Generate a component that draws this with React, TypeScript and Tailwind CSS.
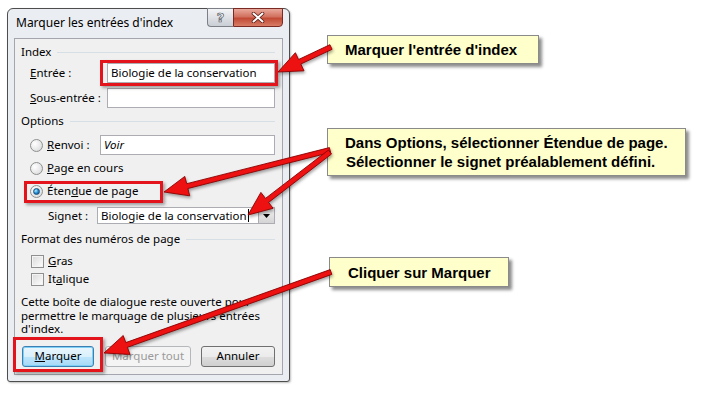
import React from 'react';

type Pt = [number, number];

function arrowPoints(tail: Pt, tip: Pt, shaft = 5, headLen = 24, headW = 20) {
  const [x1, y1] = tail;
  const [x2, y2] = tip;
  const dx = x2 - x1;
  const dy = y2 - y1;
  const len = Math.hypot(dx, dy);
  const ux = dx / len;
  const uy = dy / len;
  const px = -uy;
  const py = ux;
  const bx = x2 - ux * headLen;
  const by = y2 - uy * headLen;
  const pts: Pt[] = [
    [x1 + (px * shaft) / 2, y1 + (py * shaft) / 2],
    [bx + (px * shaft) / 2, by + (py * shaft) / 2],
    [bx + (px * headW) / 2, by + (py * headW) / 2],
    [x2, y2],
    [bx - (px * headW) / 2, by - (py * headW) / 2],
    [bx - (px * shaft) / 2, by - (py * shaft) / 2],
    [x1 - (px * shaft) / 2, y1 - (py * shaft) / 2],
  ];
  return pts.map(p => `${p[0].toFixed(1)},${p[1].toFixed(1)}`).join(' ');
}

const arrows: [Pt, Pt][] = [
  [[331, 47], [278, 72]],
  [[330, 150], [164, 192]],
  [[330, 152], [248, 215]],
  [[331, 272], [104, 353]],
];

function GroupHeader({ label, className = '' }: { label: string; className?: string }) {
  return (
    <div className={`flex items-center h-[16px] ${className}`}>
      <span className="pr-[6px]">{label}</span>
      <span className="flex-1 h-px bg-[#d5dfe5]" />
    </div>
  );
}

function Radio({ checked = false }: { checked?: boolean }) {
  return (
    <span className="w-[13px] h-[13px] shrink-0 rounded-full border border-[#8e8f8f] bg-[radial-gradient(circle_at_35%_35%,#ffffff,#e6e6e6_60%,#cfcfcf)] flex items-center justify-center">
      {checked && (
        <span className="w-[7px] h-[7px] rounded-full bg-[radial-gradient(circle_at_35%_35%,#b7ecff,#1f8fd6_50%,#0a3f6e)] border border-[#1c4f7a]" />
      )}
    </span>
  );
}

function Checkbox() {
  return (
    <span className="w-[13px] h-[13px] shrink-0 border border-[#8e8f8f] bg-[#f4f4f4] flex items-center justify-center">
      <span className="w-[9px] h-[9px] bg-linear-to-br from-[#dcdcdc] to-[#fbfbfb]" />
    </span>
  );
}

function TextBox({ children, className = '' }: { children?: React.ReactNode; className?: string }) {
  return (
    <div className={`h-[20px] bg-white border border-[#abadb3] flex items-center px-[3px] ${className}`}>
      {children}
    </div>
  );
}

const btn =
  'h-[21px] rounded-[3px] border flex items-center justify-center';

export default function App() {
  return (
    <div className="relative w-[703px] h-[397px] bg-white overflow-hidden font-['Noto_Sans',sans-serif] text-[12px] text-black leading-none">
      <div className="pl-[7px] pt-[8px]">
        {/* dialog */}
        <div className="w-[283px] h-[374px] border border-[#4d4d4d] rounded-t-[6px] rounded-b-[3px] bg-[#eaedf1] flex flex-col shadow-[1px_1px_2px_rgba(0,0,0,0.25)]">
          <div className="h-[29px] flex items-start justify-between pl-[8px] pr-[6px]">
            <span className="mt-[8px] text-[12px]">Marquer les entrées d'index</span>
            <div className="flex -mt-px">
              <div className="w-[26px] h-[19px] rounded-bl-[4px] border border-[#7c8086] border-r-0 bg-linear-to-b from-[#f3f4f6] to-[#c9ced5] flex items-center justify-center">
                <span className="font-['DejaVu_Sans',sans-serif] font-bold text-[13px] text-[#f6f6f6] [-webkit-text-stroke:0.7px_#555b63]">?</span>
              </div>
              <div className="w-[50px] h-[19px] rounded-br-[4px] border border-[#7a2a22] bg-[linear-gradient(#e9a99c,#d2715f_45%,#c14a35_55%,#d77d66)] flex items-center justify-center">
                <svg width="14" height="11" viewBox="0 0 14 11">
                  <path d="M2.5 1.5 L11.5 9.5 M11.5 1.5 L2.5 9.5" stroke="#5a1b12" strokeWidth="3.6" strokeLinecap="round" />
                  <path d="M2.5 1.5 L11.5 9.5 M11.5 1.5 L2.5 9.5" stroke="#ffffff" strokeWidth="2" strokeLinecap="round" />
                </svg>
              </div>
            </div>
          </div>

          {/* client panel */}
          <div className="ml-[6px] w-[269px] h-[337px] border border-[#a3a7ad] bg-[#f0f0f0] flex flex-col pl-[6px] pr-[7px] text-[11.5px]">
            <GroupHeader label="Index" className="mt-[5px]" />

            <div className="mt-[3px] h-[20px] flex items-center pl-[9px]">
              <span className="w-[77px]"><u>E</u>ntrée :</span>
              <TextBox className="flex-1">Biologie de la conservation</TextBox>
            </div>
            <div className="mt-[5px] h-[20px] flex items-center pl-[9px]">
              <span className="w-[77px]"><u>S</u>ous-entrée :</span>
              <TextBox className="flex-1" />
            </div>

            <GroupHeader label="Options" className="mt-[5px]" />

            <div className="mt-[6px] h-[20px] flex items-center pl-[9px]">
              <Radio />
              <span className="ml-[4px] w-[53px]"><u>R</u>envoi :</span>
              <TextBox className="flex-1"><i>Voir</i></TextBox>
            </div>
            <div className="mt-[5px] h-[16px] flex items-center pl-[9px]">
              <Radio />
              <span className="ml-[4px]"><u>P</u>age en cours</span>
            </div>
            <div className="mt-[7px] h-[16px] flex items-center pl-[9px]">
              <Radio checked />
              <span className="ml-[4px]">Éten<u>d</u>ue de page</span>
            </div>
            <div className="mt-[8px] h-[17px] flex items-center pl-[27px]">
              <span className="w-[49px]">Signet :</span>
              <div className="flex-1 h-[17px] bg-white border border-[#abadb3] flex items-center">
                <span className="flex-1 pl-[3px] flex items-center">
                  Biologie de la conservation
                  <span className="ml-px w-px h-[13px] bg-black" />
                </span>
                <span className="w-[16px] h-full border-l border-[#abadb3] bg-linear-to-b from-[#f2f2f2] to-[#d4d4d4] flex items-center justify-center">
                  <svg width="7" height="4" viewBox="0 0 7 4"><path d="M0 0 H7 L3.5 4 Z" fill="#000" /></svg>
                </span>
              </div>
            </div>

            <GroupHeader label="Format des numéros de page" className="mt-[7px]" />

            <div className="mt-[6px] h-[16px] flex items-center pl-[10px]">
              <Checkbox />
              <span className="ml-[4px]"><u>G</u>ras</span>
            </div>
            <div className="mt-[2px] h-[16px] flex items-center pl-[10px]">
              <Checkbox />
              <span className="ml-[4px]">It<u>a</u>lique</span>
            </div>

            <p className="mt-[8px] leading-[13.5px]">
              Cette boîte de dialogue reste ouverte pour
              <br />
              permettre le marquage de plusieurs entrées
              <br />
              d'index.
            </p>

            <div className="mt-[10px] flex items-center pl-px">
              <div className={`${btn} w-[72px] border-[#3c7fb1] bg-[linear-gradient(#eaf6fd,#d9f0fc_50%,#bee6fd_51%,#a7d9f5)] shadow-[inset_0_0_0_1px_#7fd0f7]`}>
                <u>M</u>arquer
              </div>
              <div className={`${btn} ml-[11px] w-[86px] border-[#b5b8bb] bg-[#f4f4f4] text-[#9a9a9a]`}>
                Marquer tout
              </div>
              <div className={`${btn} ml-[10px] w-[74px] border-[#707070] bg-[linear-gradient(#f2f2f2,#ebebeb_50%,#dddddd_51%,#cfcfcf)]`}>
                Annuler
              </div>
            </div>
          </div>
        </div>
      </div>

      {/* red highlight frames */}
      <div className="absolute left-[100px] top-[60px] w-[178px] h-[26px] border-[3px] border-[#e3141b] shadow-[2px_2px_3px_rgba(0,0,0,0.35)]" />
      <div className="absolute left-[24px] top-[181px] w-[139px] h-[22px] border-[3px] border-[#e3141b] shadow-[2px_2px_3px_rgba(0,0,0,0.35)]" />
      <div className="absolute left-[13px] top-[337px] w-[90px] h-[35px] border-[3px] border-[#e3141b] shadow-[2px_2px_3px_rgba(0,0,0,0.35)]" />

      {/* callouts */}
      <div className="absolute left-[327px] top-[35px] w-[212px] h-[29px] bg-[#ffffcc] border border-[#8a8a8a] shadow-[3px_3px_3px_rgba(0,0,0,0.45)] flex items-center pl-[17px] font-['Liberation_Sans',Arial,sans-serif] font-bold text-[15px]">
        Marquer l'entrée d'index
      </div>
      <div className="absolute left-[327px] top-[128px] w-[359px] h-[48px] bg-[#ffffcc] border border-[#8a8a8a] shadow-[3px_3px_3px_rgba(0,0,0,0.45)] flex flex-col justify-center pl-[17px] font-['Liberation_Sans',Arial,sans-serif] font-bold text-[15px] leading-[19px]">
        <span>Dans Options, sélectionner Étendue de page.</span>
        <span className="pl-px">Sélectionner le signet préalablement défini.</span>
      </div>
      <div className="absolute left-[329px] top-[257px] w-[180px] h-[30px] bg-[#ffffcc] border border-[#8a8a8a] shadow-[3px_3px_3px_rgba(0,0,0,0.45)] flex items-center pl-[18px] font-['Liberation_Sans',Arial,sans-serif] font-bold text-[15px]">
        Cliquer sur Marquer
      </div>

      {/* arrows */}
      <svg className="absolute inset-0 pointer-events-none drop-shadow-[1px_2px_1.5px_rgba(0,0,0,0.35)]" width="703" height="397" viewBox="0 0 703 397">
        {arrows.map(([t, h], i) => (
          <polygon key={i} points={arrowPoints(t, h)} fill="#ee1111" stroke="#8a0000" strokeWidth="0.9" strokeLinejoin="round" />
        ))}
      </svg>
    </div>
  );
}
